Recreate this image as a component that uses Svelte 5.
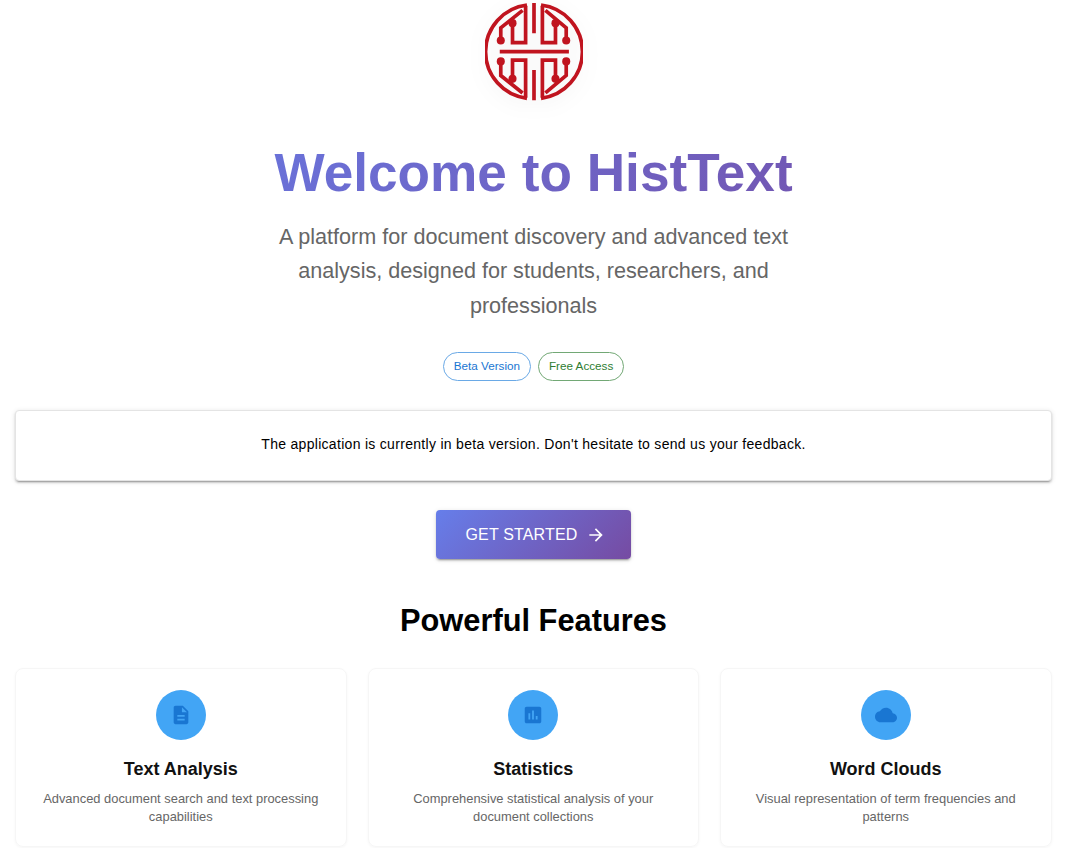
<script>
    const features = [
        {
            title: "Text Analysis",
            text: "Advanced document search and text processing capabilities",
            icon: "M14 2H6c-1.1 0-1.99.9-1.99 2L4 20c0 1.1.89 2 1.99 2H18c1.1 0 2-.9 2-2V8l-6-6zm2 16H8v-2h8v2zm0-4H8v-2h8v2zm-3-5V3.5L18.5 9H13z",
        },
        {
            title: "Statistics",
            text: "Comprehensive statistical analysis of your document collections",
            icon: "M19 3H5c-1.1 0-2 .9-2 2v14c0 1.1.9 2 2 2h14c1.1 0 2-.9 2-2V5c0-1.1-.9-2-2-2zM9 17H7v-7h2v7zm4 0h-2V7h2v10zm4 0h-2v-4h2v4z",
        },
        {
            title: "Word Clouds",
            text: "Visual representation of term frequencies and patterns",
            icon: "M19.35 10.04C18.67 6.59 15.64 4 12 4 9.11 4 6.6 5.64 5.35 8.04 2.34 8.36 0 10.91 0 14c0 3.31 2.69 6 6 6h13c2.76 0 5-2.24 5-5 0-2.64-2.05-4.78-4.65-4.96z",
        },
    ];
</script>

<main>
    <section class="hero">
        <svg class="logo" viewBox="78 10 292 292" aria-label="HistText logo">
            <g fill="none" stroke="#c0141f" stroke-width="11">
                <path d="M203 16 A140 140 0 0 0 203 294" />
                <path d="M245 16 A140 140 0 0 1 245 294" />
                <path d="M224 10 V100 M224 210 V300" />
                <path d="M122 155 H328" />
                <path d="M160 70 V128 H199 V18" />
                <path d="M288 70 V128 H249 V18" />
                <path d="M160 236 V180 H199 V292" />
                <path d="M288 236 V180 H249 V292" />
                <path d="M125 122 V84 L190 32" />
                <path d="M320 122 V84 L258 32" />
                <path d="M125 184 V226 L190 278" />
                <path d="M320 184 V226 L258 278" />
            </g>
            <g fill="#c0141f">
                <circle cx="160" cy="70" r="12" />
                <circle cx="288" cy="70" r="12" />
                <circle cx="125" cy="122" r="12" />
                <circle cx="320" cy="122" r="12" />
                <circle cx="125" cy="184" r="12" />
                <circle cx="320" cy="184" r="12" />
                <circle cx="160" cy="236" r="12" />
                <circle cx="288" cy="236" r="12" />
            </g>
        </svg>

        <h1>Welcome to HistText</h1>
        <p class="subtitle">
            A platform for document discovery and advanced text analysis, designed for
            students, researchers, and professionals
        </p>

        <div class="chips">
            <span class="chip blue">Beta Version</span>
            <span class="chip green">Free Access</span>
        </div>
    </section>

    <div class="notice">
        The application is currently in beta version. Don't hesitate to send us your feedback.
    </div>

    <div class="action">
        <button type="button">
            GET STARTED
            <svg viewBox="0 0 24 24"><path d="M12 4l-1.41 1.41L16.17 11H4v2h12.17l-5.58 5.59L12 20l8-8z" /></svg>
        </button>
    </div>

    <h2>Powerful Features</h2>

    <div class="grid">
        {#each features as f}
            <article class="card">
                <div class="circle">
                    <svg viewBox="0 0 24 24"><path d={f.icon} /></svg>
                </div>
                <h3>{f.title}</h3>
                <p>{f.text}</p>
            </article>
        {/each}
    </div>
</main>

<style>
    :global(body) {
        background: #fff;
        overflow: hidden;
    }

    main {
        height: 848px;
        overflow: hidden;
        padding: 0 14px 0 15px;
        font-family: "Liberation Sans", Arial, sans-serif;
        color: #000;
    }

    .hero {
        text-align: center;
        padding-top: 3px;
    }

    .logo {
        display: block;
        width: 98px;
        height: 98px;
        margin: 0 auto;
        filter: blur(0.35px) drop-shadow(0 4px 10px rgba(0, 0, 0, 0.06));
    }

    h1 {
        margin: 41px 0 0;
        font-size: 53.2px;
        line-height: 62px;
        font-weight: 700;
        background: linear-gradient(135deg, #667eea 0%, #764ba2 100%);
        -webkit-background-clip: text;
        background-clip: text;
        color: transparent;
    }

    .subtitle {
        width: 560px;
        margin: 15.7px auto 0;
        font-size: 21.6px;
        line-height: 34.5px;
        color: #666;
    }

    .chips {
        display: flex;
        justify-content: center;
        gap: 7px;
        margin-top: 28.8px;
    }

    .chip {
        display: flex;
        align-items: center;
        height: 29px;
        box-sizing: border-box;
        padding: 0 10px 2px;
        border: 1px solid;
        border-radius: 15px;
        font-size: 11.7px;
    }

    .blue {
        color: #1976d2;
        border-color: #6aa9e6;
    }

    .green {
        color: #2e7d32;
        border-color: #72a875;
    }

    .notice {
        margin-top: 29px;
        height: 71px;
        box-sizing: border-box;
        padding-top: 24px;
        border: 1px solid #e4e4e4;
        border-radius: 4px;
        background: #fff;
        text-align: center;
        font-size: 14px;
        line-height: 18px;
        letter-spacing: 0.3px;
        box-shadow:
            0 3px 1px -2px rgba(0, 0, 0, 0.2),
            0 2px 2px 0 rgba(0, 0, 0, 0.14),
            0 1px 5px 0 rgba(0, 0, 0, 0.12);
    }

    .action {
        display: flex;
        justify-content: center;
        margin-top: 29px;
    }

    button {
        display: flex;
        align-items: center;
        gap: 8px;
        width: 195px;
        height: 49px;
        justify-content: center;
        padding: 1px 0 0 4px;
        border: none;
        border-radius: 4px;
        background: linear-gradient(135deg, #667eea 0%, #764ba2 100%);
        color: #fff;
        font-family: inherit;
        font-size: 16px;
        letter-spacing: 0.17px;
        box-shadow:
            0 3px 1px -2px rgba(0, 0, 0, 0.2),
            0 2px 2px 0 rgba(0, 0, 0, 0.14),
            0 1px 5px 0 rgba(0, 0, 0, 0.12);
    }

    button svg {
        width: 20px;
        height: 20px;
        fill: #fff;
    }

    h2 {
        margin: 42px 0 0;
        text-align: center;
        font-size: 30.8px;
        line-height: 40px;
        font-weight: 700;
    }

    .grid {
        display: grid;
        grid-template-columns: repeat(3, 331.5px);
        gap: 21px;
        margin-top: 27px;
    }

    .card {
        padding: 21px 20px 20px;
        height: 179px;
        box-sizing: border-box;
        border: 1px solid #f6f6f6;
        border-radius: 8px;
        text-align: center;
        box-shadow: 0 1px 3px rgba(0, 0, 0, 0.04);
    }

    .circle {
        display: flex;
        align-items: center;
        justify-content: center;
        width: 50px;
        height: 50px;
        margin: 0 auto;
        border-radius: 50%;
        background: #42a5f5;
    }

    .circle svg {
        width: 22px;
        height: 22px;
        fill: #1976d2;
    }

    h3 {
        margin: 18px 0 0;
        font-size: 18px;
        line-height: 22px;
        font-weight: 700;
        color: #111;
    }

    .card p {
        margin: 10px 0 0;
        font-size: 12.9px;
        line-height: 18px;
        color: #666;
    }
</style>
